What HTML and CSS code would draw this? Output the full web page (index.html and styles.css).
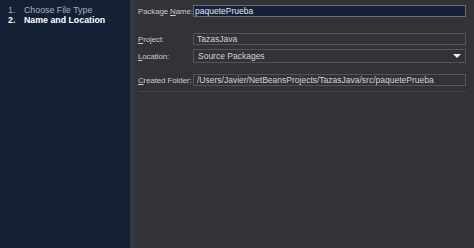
FILE: index.html
```html
<!DOCTYPE html>
<html lang="en">
<head>
	<meta charset="UTF-8">
	<title>New Java Package</title>
	<link rel="stylesheet" href="styles.css">
</head>
<body>
	<div class="wizard">
		<!-- steps -->
		<ol class="steps">
			<li><span class="num">1.</span>Choose File Type</li>
			<li class="current"><span class="num">2.</span>Name and Location</li>
		</ol>
		<!-- form -->
		<div class="panel">
			<div class="row first">
				<label>Package <u>N</u>ame:</label>
				<div class="field focus">paquetePrueba</div>
			</div>
			<div class="row gap">
				<label><u>P</u>roject:</label>
				<div class="field">TazasJava</div>
			</div>
			<div class="row">
				<label><u>L</u>ocation:</label>
				<div class="field combo">Source Packages<span class="arrow"></span></div>
			</div>
			<div class="row folder">
				<label><u>C</u>reated Folder:</label>
				<div class="field">/Users/Javier/NetBeansProjects/TazasJava/src/paquetePrueba</div>
			</div>
			<div class="sep"></div>
		</div>
	</div>
</body>
</html>
```
FILE: styles.css
```css
*{
	margin: 0;
	padding: 0;
	box-sizing: border-box;
}
body{
	width: 474px;
	height: 248px;
	overflow: hidden;
	background: #333237;
	font-family: "Liberation Sans", Arial, sans-serif;
	font-size: 8.5px;
	color: #d2d2d6;
}
.wizard{
	display: flex;
	height: 248px;
}
.steps{
	width: 135px;
	background: #142035;
	border-right: 5px solid #393943;
	list-style: none;
	padding: 5px 0 0 8px;
	color: #aab0bd;
	font-size: 8.8px;
}
.steps li{
	display: flex;
	height: 10px;
	line-height: 10px;
}
.steps .num{
	width: 16px;
}
.steps .current{
	color: #ffffff;
	font-weight: bold;
}
.panel{
	flex: 1;
	padding: 5px 8px 0 3px;
}
.row{
	display: flex;
	align-items: center;
	margin-bottom: 4px;
}
.row.gap{
	margin-top: 16px;
}
.row.folder{
	margin-top: 11px;
}
.row label{
	width: 55px;
	flex-shrink: 0;
	white-space: nowrap;
	font-size: 7.9px;
	letter-spacing: -0.1px;
	color: #c9c9cd;
}
.row u{
	text-decoration: underline;
	text-underline-offset: 1px;
}
.field{
	flex: 1;
	min-width: 0;
	height: 12px;
	line-height: 10px;
	padding-left: 3px;
	border: 1px solid #55545b;
	background: #333237;
	white-space: nowrap;
	overflow: hidden;
	position: relative;
}
.field.focus{
	background: #14213a;
	border-color: #6a6b75;
	padding-left: 1px;
	color: #e6e8ee;
}
.field.combo{
	height: 14px;
	line-height: 12px;
	padding-left: 4px;
}
.arrow{
	position: absolute;
	right: 4px;
	top: 4px;
	width: 0;
	height: 0;
	border-left: 4px solid transparent;
	border-right: 4px solid transparent;
	border-top: 4px solid #f2f2f2;
}
.sep{
	height: 1px;
	background: #45444b;
	margin-top: 5px;
}
```
